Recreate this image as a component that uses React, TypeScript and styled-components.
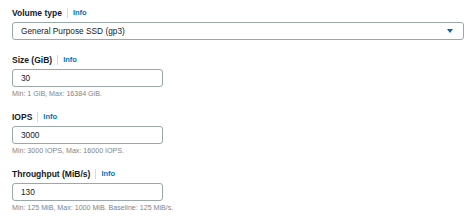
import React from "react";
import styled, { createGlobalStyle } from "styled-components";

const Global = createGlobalStyle`
  html, body { margin: 0; padding: 0; background: #ffffff; }
  body { font-family: "Liberation Sans", Arial, sans-serif; color: #16191f; }
  * { box-sizing: border-box; }
`;

const Form = styled.div`
  display: flex;
  flex-direction: column;
  padding: 7px 0 0 12px;
  width: 474px;
`;

const Field = styled.div<{ $gap: number }>`
  display: flex;
  flex-direction: column;
  margin-bottom: ${(p) => p.$gap}px;
`;

const LabelRow = styled.div`
  display: flex;
  align-items: center;
  height: 12px;
  margin-bottom: 3px;
`;

const Label = styled.span`
  font-size: 8.5px;
  font-weight: 700;
  color: #16191f;
  line-height: 12px;
`;

const Divider = styled.span`
  width: 1px;
  height: 10px;
  background: #d5dbdb;
  margin: 0 5px 0 5px;
`;

const InfoLink = styled.a`
  font-size: 7.5px;
  font-weight: 700;
  color: #0073bb;
  text-decoration: none;
  line-height: 12px;
`;

const Box = styled.div<{ $width: number }>`
  width: ${(p) => p.$width}px;
  height: 18px;
  border: 1px solid #9ba7a8;
  border-radius: 3px;
  background: #ffffff;
  display: flex;
  align-items: center;
  justify-content: space-between;
  padding: 0 10px 0 8px;
  font-size: 8.3px;
  color: #16191f;
`;

const Caret = styled.svg`
  width: 6px;
  height: 4px;
  display: block;
`;

const Hint = styled.div`
  font-size: 7.1px;
  color: #7d868c;
  line-height: 10px;
  margin-top: 2px;
`;

type FieldProps = {
  label: string;
  value: string;
  hint?: string;
  width: number;
  select?: boolean;
  gap: number;
};

function FormField({ label, value, hint, width, select, gap }: FieldProps) {
  return (
    <Field $gap={gap}>
      <LabelRow>
        <Label>{label}</Label>
        <Divider />
        <InfoLink href="#">Info</InfoLink>
      </LabelRow>
      <Box $width={width}>
        <span>{value}</span>
        {select && (
          <Caret viewBox="0 0 6 4">
            <path d="M0 0 H6 L3 4 Z" fill="#0a5fb0" />
          </Caret>
        )}
      </Box>
      {hint && <Hint>{hint}</Hint>}
    </Field>
  );
}

export default function App() {
  return (
    <>
      <Global />
      <Form>
        <FormField label="Volume type" value="General Purpose SSD (gp3)" width={452} select gap={14} />
        <FormField label="Size (GiB)" value="30" hint="Min: 1 GiB, Max: 16384 GiB." width={151} gap={12} />
        <FormField label="IOPS" value="3000" hint="Min: 3000 IOPS, Max: 16000 IOPS." width={151} gap={12} />
        <FormField
          label="Throughput (MiB/s)"
          value="130"
          hint="Min: 125 MiB, Max: 1000 MiB. Baseline: 125 MiB/s."
          width={151}
          gap={0}
        />
      </Form>
    </>
  );
}
